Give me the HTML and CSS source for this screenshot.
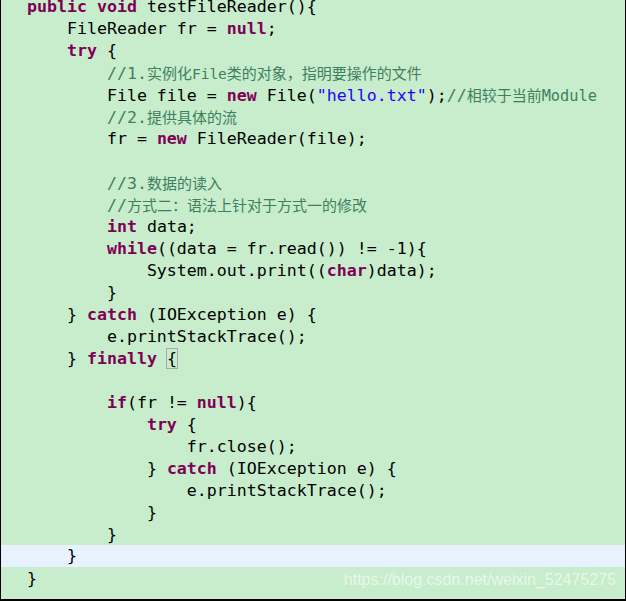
FILE: index.html
```html
<!DOCTYPE html>
<html>
<head>
<meta charset="utf-8">
<link rel="stylesheet" href="styles.css">
</head>
<body>
<div class="editor">
  <div class="code">
    <div class="ln"><span class="k">public</span> <span class="k">void</span> testFileReader(){</div>
    <div class="ln">    FileReader fr = <span class="k">null</span>;</div>
    <div class="ln">    <span class="k">try</span> {</div>
    <div class="ln">        <span class="c">//1.<span class="cj">实例化</span><span class="cf">File</span><span class="cj">类的对象，指明要操作的文件</span></span></div>
    <div class="ln">        File file = <span class="k">new</span> File(<span class="s">"hello.txt"</span>);<span class="c">//<span class="cj">相较于当前</span><span class="cm">Module</span></span></div>
    <div class="ln">        <span class="c">//2.<span class="cj">提供具体的流</span></span></div>
    <div class="ln">        fr = <span class="k">new</span> FileReader(file);</div>
    <div class="ln"> </div>
    <div class="ln">        <span class="c">//3.<span class="cj">数据的读入</span></span></div>
    <div class="ln">        <span class="c">//<span class="cj">方式二：语法上针对于方式一的修改</span></span></div>
    <div class="ln">        <span class="k">int</span> data;</div>
    <div class="ln">        <span class="k">while</span>((data = fr.read()) != -1){</div>
    <div class="ln">            System.out.print((<span class="k">char</span>)data);</div>
    <div class="ln">        }</div>
    <div class="ln">    } <span class="k">catch</span> (IOException e) {</div>
    <div class="ln">        e.printStackTrace();</div>
    <div class="ln">    } <span class="k">finally</span> <span class="match">{</span></div>
    <div class="ln"> </div>
    <div class="ln">        <span class="k">if</span>(fr != <span class="k">null</span>){</div>
    <div class="ln">            <span class="k">try</span> {</div>
    <div class="ln">                fr.close();</div>
    <div class="ln">            } <span class="k">catch</span> (IOException e) {</div>
    <div class="ln">                e.printStackTrace();</div>
    <div class="ln">            }</div>
    <div class="ln">        }</div>
    <div class="ln cur">    }</div>
    <div class="ln">}</div>
  </div>
  <div class="wm">https://blog.csdn.net/weixin_52475275</div>
</div>
</body>
</html>
```

FILE: styles.css
```css
html, body {
  margin: 0;
  padding: 0;
  background: #ffffff;
}

.editor {
  position: relative;
  width: 626px;
  height: 601px;
  box-sizing: border-box;
  background: #c7edcc;
  border-left: 1px solid #000;
  border-right: 1px solid #000;
  border-bottom: 2px solid #000;
  overflow: hidden;
}

.code {
  margin-top: -5px;
  font-family: "DejaVu Sans Mono", monospace;
  font-size: 16.6px;
  line-height: 22px;
  color: #000;
}

.ln {
  height: 22px;
  white-space: pre;
  padding-left: 26px;
  position: relative;
  top: 1px;
}

.ln.cur {
  background: #e8f2fe;
  top: 0;
}

.k {
  color: #7f0055;
  font-weight: bold;
}

.s {
  color: #2a00ff;
}

.c {
  color: #3f7f5f;
}

.cj {
  font-family: "Noto Sans CJK SC", sans-serif;
  font-size: 15px;
}

.cf {
  font-family: "DejaVu Sans Mono", monospace;
  font-size: 14.5px;
}

.cm {
  font-family: "DejaVu Sans Mono", monospace;
  font-size: 15.3px;
}

.match {
  outline: 1px solid #a8a8a8;
  outline-offset: 0;
}

.wm {
  position: absolute;
  right: 9px;
  bottom: 10px;
  font-family: "Liberation Sans", Arial, sans-serif;
  font-size: 16px;
  color: rgba(255, 255, 255, 0.6);
}
```
